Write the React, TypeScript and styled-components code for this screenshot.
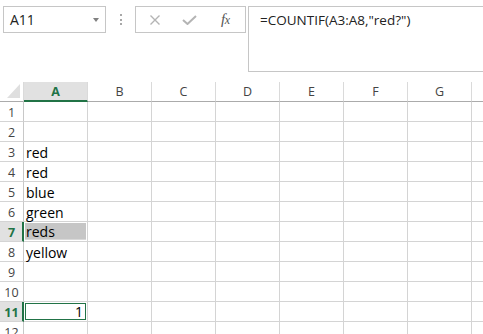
import React from "react";
import styled, { createGlobalStyle } from "styled-components";

const Global = createGlobalStyle`
  html, body { margin: 0; padding: 0; background: #ffffff; }
  body { font-family: "Open Sans", "Liberation Sans", sans-serif; overflow: hidden; }
`;

const GREEN = "#217346";
const GRID = "#d4d4d4";

const Page = styled.div`
  width: 483px;
  height: 334px;
  overflow: hidden;
  background: #fff;
`;

const TopBar = styled.div`
  display: flex;
  align-items: flex-start;
  padding: 6px 0 0 3px;
`;

const NameBox = styled.div`
  box-sizing: border-box;
  width: 103px;
  height: 27px;
  border: 1px solid #c6c6c6;
  display: flex;
  align-items: center;
  justify-content: space-between;
  padding: 0 6px 0 6px;
  font-size: 14px;
  color: #222;
`;

const Arrow = styled.span`
  width: 0;
  height: 0;
  border-left: 3.5px solid transparent;
  border-right: 3.5px solid transparent;
  border-top: 4px solid #808080;
  margin-top: 1px;
`;

const Dots = styled.div`
  width: 29px;
  height: 27px;
  display: flex;
  flex-direction: column;
  align-items: center;
  justify-content: center;
  gap: 2.5px;
  span {
    width: 2px;
    height: 2px;
    background: #a8a8a8;
  }
`;

const FxBox = styled.div`
  box-sizing: border-box;
  width: 111px;
  height: 27px;
  border: 1px solid #c6c6c6;
  display: flex;
  align-items: center;
  padding-left: 13px;
  gap: 21px;
`;

const FxText = styled.span`
  font-family: "Liberation Serif", "DejaVu Serif", serif;
  font-style: italic;
  font-size: 15px;
  color: #555;
  margin-left: 3px;
  letter-spacing: -0.5px;
  small { font-size: 12px; }
`;

const FormulaBox = styled.div`
  box-sizing: border-box;
  flex: 1;
  height: 66px;
  margin-left: 2px;
  margin-right: -2px;
  border: 1px solid #c6c6c6;
  padding: 4px 0 0 11px;
  font-size: 13.5px;
  line-height: 19px;
  color: #222;
`;

const Sheet = styled.div`
  margin-top: 10px;
  display: grid;
  grid-template-columns: 24px repeat(8, 64px);
  grid-auto-rows: 20px;
`;

const Corner = styled.div`
  box-sizing: border-box;
  border-right: 1px solid #dadada;
  border-bottom: 1px solid #ababab;
  display: flex;
  align-items: flex-end;
  justify-content: flex-end;
  padding: 0 3px 3px 0;
`;

const ColHeader = styled.div<{ $active?: boolean }>`
  box-sizing: border-box;
  border-right: 1px solid #dadada;
  border-bottom: ${(p) => (p.$active ? `2px solid ${GREEN}` : "1px solid #ababab")};
  background: ${(p) => (p.$active ? "#e1e1e1" : "#fff")};
  color: ${(p) => (p.$active ? GREEN : "#444")};
  font-weight: ${(p) => (p.$active ? 700 : 400)};
  font-size: 12.5px;
  display: flex;
  align-items: center;
  justify-content: center;
  padding-top: ${(p) => (p.$active ? "1px" : "0")};
`;

const RowHeader = styled.div<{ $active?: boolean }>`
  box-sizing: border-box;
  border-right: ${(p) => (p.$active ? `2px solid ${GREEN}` : `1px solid #c8c8c8`)};
  border-bottom: 1px solid ${GRID};
  background: ${(p) => (p.$active ? "#e1e1e1" : "#fff")};
  color: ${(p) => (p.$active ? GREEN : "#444")};
  font-weight: ${(p) => (p.$active ? 700 : 400)};
  font-size: 12.5px;
  display: flex;
  align-items: center;
  justify-content: center;
  padding-top: 1px;
  padding-left: ${(p) => (p.$active ? "1px" : "0")};
`;

const Cell = styled.div<{ $pad?: number }>`
  box-sizing: border-box;
  border-right: 1px solid ${GRID};
  border-bottom: 1px solid ${GRID};
  display: flex;
  align-items: stretch;
  padding: ${(p) => (p.$pad ?? 0)}px;
  font-size: 14px;
  color: #000;
  min-width: 0;
`;

const CellText = styled.span`
  flex: 1;
  display: flex;
  align-items: center;
  padding: 1px 2px 0 2px;
  white-space: nowrap;
`;

const Highlight = styled.span`
  flex: 1;
  display: flex;
  align-items: center;
  padding: 1px 1px 0 1px;
  background: #c6c6c6;
  border-bottom: 1px solid #d9d9d9;
`;

const Selection = styled.span`
  flex: 1;
  display: flex;
  align-items: center;
  justify-content: flex-end;
  padding: 0 2px 0 0;
  border: 1px solid ${GREEN};
`;

const cols = ["A", "B", "C", "D", "E", "F", "G", "H"];
const values: Record<number, string> = {
  3: "red",
  4: "red",
  5: "blue",
  6: "green",
  7: "reds",
  8: "yellow",
};

export default function App() {
  const rows = Array.from({ length: 12 }, (_, i) => i + 1);
  return (
    <Page>
      <Global />
      <TopBar>
        <NameBox>
          <span>A11</span>
          <Arrow />
        </NameBox>
        <Dots>
          <span />
          <span />
          <span />
        </Dots>
        <FxBox>
          <svg width="12" height="12" viewBox="0 0 12 12">
            <path d="M1.5 1.5 L10.5 10.5 M10.5 1.5 L1.5 10.5" stroke="#b4b4b4" strokeWidth="1.4" fill="none" />
          </svg>
          <svg width="15" height="10" viewBox="0 0 15 10">
            <path d="M1 5 L5.5 9 L14 1" stroke="#b4b4b4" strokeWidth="2" fill="none" />
          </svg>
          <FxText>
            f<small>x</small>
          </FxText>
        </FxBox>
        <FormulaBox>=COUNTIF(A3:A8,"red?")</FormulaBox>
      </TopBar>
      <Sheet>
        <Corner>
          <svg width="13" height="14" viewBox="0 0 13 14">
            <path d="M13 0 L13 14 L0 14 Z" fill="#dfdfdf" />
          </svg>
        </Corner>
        {cols.map((c) => (
          <ColHeader key={c} $active={c === "A"}>
            {c === "H" ? "" : c}
          </ColHeader>
        ))}
        {rows.map((r) => (
          <React.Fragment key={r}>
            <RowHeader $active={r === 7 || r === 11}>{r}</RowHeader>
            {cols.map((c) => {
              if (c === "A" && r === 7) {
                return (
                  <Cell key={c} $pad={1}>
                    <Highlight>{values[r]}</Highlight>
                  </Cell>
                );
              }
              if (c === "A" && r === 11) {
                return (
                  <Cell key={c} $pad={1}>
                    <Selection>1</Selection>
                  </Cell>
                );
              }
              return (
                <Cell key={c}>
                  <CellText>{c === "A" ? values[r] ?? "" : ""}</CellText>
                </Cell>
              );
            })}
          </React.Fragment>
        ))}
      </Sheet>
    </Page>
  );
}
